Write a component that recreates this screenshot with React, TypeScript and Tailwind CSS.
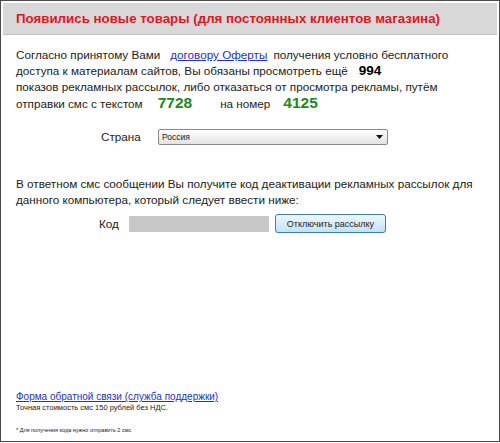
import React from "react";

export default function App() {
  return (
    <div className="w-[500px] h-[443px] bg-white whitespace-nowrap" style={{ fontFamily: '"Liberation Sans", Arial, sans-serif' }}>
      <div className="w-[500px] h-[442px] border border-[#4a4a4a] flex flex-col bg-white">
        <div className="mx-[2px] mt-[2px] h-[32px] bg-[#d8d8d8] border-b border-[#c4c4c4] flex items-center pl-[13px]">
          <span className="text-[13.3px] font-bold text-[#e3161f]">Появились новые товары (для постоянных клиентов магазина)</span>
        </div>
        <div className="pl-[15px] pr-[10px] pt-[12px] text-[11.7px] leading-[16px] text-[#222]">
          <p>
            Согласно принятому Вами<a className="ml-[10px] text-[#2233cc] underline">договору Оферты</a><span className="ml-[6px]">получения условно бесплатного</span>
            <br />доступа к материалам сайтов, Вы обязаны просмотреть ещё<b className="ml-[11px] text-[13.5px] text-black">994</b>
            <br />показов рекламных рассылок, либо отказаться от просмотра рекламы, путём
            <br />отправки смс с текстом<b className="ml-[15px] text-[15.5px] text-[#228822]">7728</b><span className="ml-[28px]">на номер</span><b className="ml-[13px] text-[15.5px] text-[#228822]">4125</b>
          </p>
          <div className="flex items-center mt-[17px] ml-[85px] h-[16px]">
            <span className="w-[57px]">Страна</span>
            <div className="w-[230px] h-[16px] border border-[#8a8a8a] rounded-[2px] bg-gradient-to-b from-white to-[#e2e2e2] flex items-center justify-between pl-[3px] pr-[4px]">
              <span className="text-[8.5px]">Россия</span>
              <svg width="7" height="4" viewBox="0 0 7 4"><path d="M0 0h7L3.5 4z" fill="#111" /></svg>
            </div>
          </div>
          <p className="mt-[31px]">
            В ответном смс сообщении Вы получите код деактивации рекламных рассылок для
            <br />данного компьютера, который следует ввести ниже:
          </p>
          <div className="flex items-center mt-[6px] ml-[83px]">
            <span className="w-[30px]">Код</span>
            <div className="w-[140px] h-[16px] bg-[#c8c8c8]" />
            <button className="ml-[6px] w-[111px] h-[19px] border border-[#3c7fb1] rounded-[3px] bg-gradient-to-b from-[#eef7fd] to-[#c2e3f8] text-[9px] text-[#222]">Отключить рассылку</button>
          </div>
        </div>
        <div className="mt-auto pl-[15px] pb-[7px]">
          <a className="text-[10px] text-[#2233cc] underline leading-[12px] block">Форма обратной связи (служба поддержки)</a>
          <div className="text-[7.5px] leading-[10px] text-[#222]">Точная стоимость смс 150 рублей без НДС.</div>
          <div className="text-[5.5px] leading-[8px] text-[#222] mt-[13px]">* Для получения кода нужно отправить 2 смс</div>
        </div>
      </div>
    </div>
  );
}
